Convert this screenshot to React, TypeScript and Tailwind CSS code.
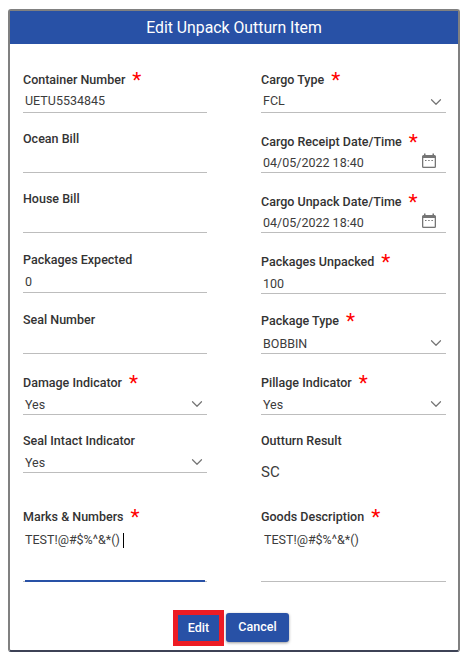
import { ChevronDown } from "lucide-react";

type FieldProps = {
  label: string;
  value?: string;
  required?: boolean;
  kind?: "text" | "select" | "date";
  // row height, input height and value offset differ a little from row to row
  rowClass: string;
  inputClass: string;
};

function CalendarIcon() {
  return (
    <svg className="absolute right-[9.5px] bottom-[3px] h-[17px] w-[16px] text-[#757575]" viewBox="0 0 16 16" fill="none">
      <path d="M3 1h1.5v1.5h7V1H13v1.5h.5a1.5 1.5 0 0 1 1.5 1.5v10a1.5 1.5 0 0 1-1.5 1.5h-11A1.5 1.5 0 0 1 1 14V4a1.5 1.5 0 0 1 1.5-1.5H3V1z" fill="currentColor" />
      <rect x="2.3" y="5.5" width="11.4" height="8.7" fill="#fff" />
      <path d="M4 8h1.5M7.2 8h1.5M10.4 8h1.5" stroke="currentColor" strokeWidth="1" />
    </svg>
  );
}

function Label({ label, required }: { label: string; required?: boolean }) {
  return (
    <div className="flex h-[20px] items-start text-[12.5px] font-medium leading-[20px] text-[#333333]">
      <span>{label}</span>
      {required && <span className="ml-[7px] text-[21px] font-normal leading-[20px] text-[#ff0000]">*</span>}
    </div>
  );
}

function Field({ label, value, required, kind = "text", rowClass, inputClass }: FieldProps) {
  return (
    <div className={`flex flex-col justify-end ${rowClass}`}>
      <Label label={label} required={required} />
      <div className={`relative flex items-end border-b border-[#bdbdbd] pl-[2px] text-[12.5px] leading-[16px] text-[#3c3c3c] ${inputClass}`}>
        <span>{value}</span>
        {kind === "select" && <ChevronDown className="absolute bottom-[1px] right-[1px] text-[#757575]" size={18} strokeWidth={1.6} />}
        {kind === "date" && <CalendarIcon />}
      </div>
    </div>
  );
}

export default function App() {
  return (
    <div className="h-[658px] w-[467px] bg-white pl-[8px] pt-[9px] font-['Roboto',sans-serif]">
      <div className="h-[643px] w-[452px] rounded-[3px] border-2 border-[#808080] border-b-[#3d4256] bg-white">
        <div className="flex h-[33px] items-center justify-center bg-[#2851a6] text-[15.8px] text-white">
          Edit Unpack Outturn Item
        </div>
        <div className="grid grid-cols-[184px_185px] gap-x-[54px] pl-[13px] pt-[26px]">
          <div>
            <Field label="Container Number" value="UETU5534845" required rowClass="h-[43px]" inputClass="h-[23px] pb-[3px]" />
            <Field label="Ocean Bill" rowClass="h-[60px]" inputClass="h-[24px]" />
            <Field label="House Bill" rowClass="h-[60px]" inputClass="h-[24px]" />
            <Field label="Packages Expected" value="0" rowClass="h-[60px]" inputClass="h-[23px] pb-[2px]" />
            <Field label="Seal Number" rowClass="h-[61px]" inputClass="h-[24px]" />
            <Field label="Damage Indicator" value="Yes" required kind="select" rowClass="h-[61px]" inputClass="h-[22px] pb-[1px]" />
            <Field label="Seal Intact Indicator" value="Yes" kind="select" rowClass="h-[58px]" inputClass="h-[22px] pb-[1px]" />
          </div>
          <div>
            <Field label="Cargo Type" value="FCL" required kind="select" rowClass="h-[43px]" inputClass="h-[23px] pb-[3px]" />
            <Field label="Cargo Receipt Date/Time" value="04/05/2022 18:40" required kind="date" rowClass="h-[60px]" inputClass="h-[21px] pb-[1px]" />
            <Field label="Cargo Unpack Date/Time" value="04/05/2022 18:40" required kind="date" rowClass="h-[60px]" inputClass="h-[21px] pb-[1px]" />
            <Field label="Packages Unpacked" value="100" required rowClass="h-[61px]" inputClass="h-[22px] pb-[1px]" />
            <Field label="Package Type" value="BOBBIN" required kind="select" rowClass="h-[60px]" inputClass="h-[23px] pb-[1px]" />
            <Field label="Pillage Indicator" value="Yes" required kind="select" rowClass="h-[61px]" inputClass="h-[22px] pb-[1px]" />
            <div className="pt-[16px]">
              <Label label="Outturn Result" />
              <div className="mt-[9px] text-[15px] leading-[24px] text-[#3c3c3c]">SC</div>
            </div>
          </div>
        </div>
        <div className="grid grid-cols-[184px_185px] gap-x-[54px] pl-[13px] pt-[23px]">
          <div>
            <Label label="Marks & Numbers" required />
            <div className="relative h-[55px] border-b border-[#bdbdbd] pl-[2px] pt-[5px] text-[12.5px] leading-[16px] text-[#3c3c3c]">
              <span>TEST!@#$%^&amp;*()</span>
              <span className="ml-[3px] inline-block h-[15px] w-px bg-black align-middle" />
              <div className="absolute bottom-[-1px] left-[2px] right-[2px] h-[2px] bg-[#2851a6]" />
            </div>
          </div>
          <div>
            <Label label="Goods Description" required />
            <div className="h-[55px] border-b border-[#bdbdbd] pl-[3px] pt-[5px] text-[12.5px] leading-[16px] text-[#3c3c3c]">
              TEST!@#$%^&amp;*()
            </div>
          </div>
        </div>
        <div className="mt-[28px] flex justify-center gap-[2px] pr-[6px]">
          <div className="h-[36px] w-[51px] border-[5px] border-[#ed1c24]">
            <button className="h-full w-full bg-[#2851a6] text-[12.5px] font-medium text-white">Edit</button>
          </div>
          <button className="mt-[3px] h-[29px] w-[63px] rounded-[3px] bg-[#2851a6] text-[12.5px] font-medium text-white shadow-[0_1px_3px_rgba(0,0,0,0.4)]">
            Cancel
          </button>
        </div>
      </div>
    </div>
  );
}
